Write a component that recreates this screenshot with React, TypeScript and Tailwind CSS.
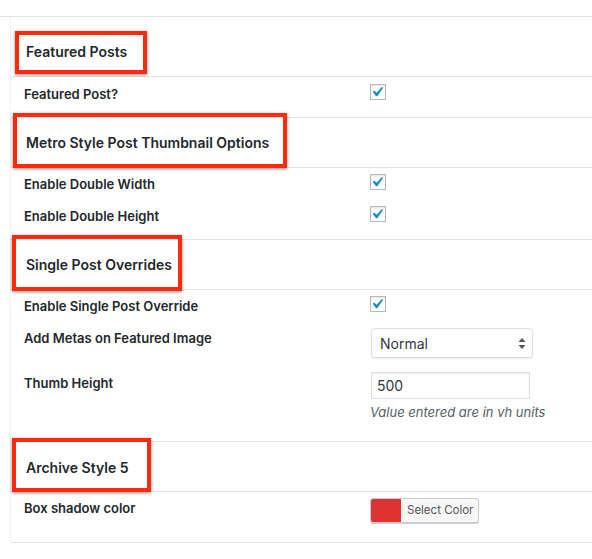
import * as React from "react";

const font = { fontFamily: "Inter, 'Liberation Sans', sans-serif" };

function Check() {
  return (
    <span className="relative h-4 w-4 shrink-0 border border-[#b4b9be] bg-white shadow-[inset_0_1px_2px_rgba(0,0,0,0.1)]">
      <svg width="20" height="20" viewBox="0 0 20 20" className="absolute -left-[4px] -top-[3px]">
        <path d="M14.83 4.89l1.34.94-5.81 8.38H9.02L5.78 9.67l1.34-1.25 2.57 2.4z" fill="#1e8cbe" />
      </svg>
    </span>
  );
}

function Mark({ className }: { className: string }) {
  return (
    <span
      className={
        "pointer-events-none absolute border-4 border-[#ff2a0c] shadow-[0_1px_3px_rgba(0,0,0,0.45)] " + className
      }
    />
  );
}

function Heading({ title, pad, mark }: { title: string; pad: string; mark: string }) {
  return (
    <div className={"relative border-b border-[#e2e4e7] pl-[15px] " + pad}>
      <h3 className="text-[14px] font-semibold leading-[20px] text-[#23282d]">{title}</h3>
      <Mark className={mark} />
    </div>
  );
}

function Label({ children }: { children: React.ReactNode }) {
  return (
    <div className="w-[359px] shrink-0 pl-[13px] text-[13px] font-semibold leading-[20px] text-[#23282d]">
      {children}
    </div>
  );
}

export default function App() {
  return (
    <div className="h-[559px] w-[592px] overflow-hidden bg-white" style={font}>
      <div className="mt-4 border-t border-[#e2e4e7]">
        <div className="ml-[10px] border-l border-[#f1f1f1]">
          <Heading title="Featured Posts" pad="pt-[25px] pb-[14px]" mark="left-[4px] top-[14px] h-[43px] w-[132px]" />
          <div className="border-b border-[#e2e4e7] pt-[7px] pb-[13px]">
            <div className="flex items-start">
              <Label>Featured Post?</Label>
              <Check />
            </div>
          </div>

          <Heading
            title="Metro Style Post Thumbnail Options"
            pad="pt-[15px] pb-[14px]"
            mark="left-[2px] -top-[5px] h-[55px] w-[274px]"
          />
          <div className="flex flex-col gap-3 border-b border-[#e2e4e7] pt-[6px] pb-[13px]">
            <div className="flex items-start">
              <Label>Enable Double Width</Label>
              <Check />
            </div>
            <div className="flex items-start">
              <Label>Enable Double Height</Label>
              <Check />
            </div>
          </div>

          <Heading
            title="Single Post Overrides"
            pad="pt-[15px] pb-[14px]"
            mark="left-[1px] -top-[5px] h-[56px] w-[170px]"
          />
          <div className="flex flex-col border-b border-[#e2e4e7] pt-[6px] pb-[20px]">
            <div className="flex items-start">
              <Label>Enable Single Post Override</Label>
              <Check />
            </div>
            <div className="mt-3 flex items-start">
              <Label>Add Metas on Featured Image</Label>
              <div className="relative ml-px flex h-[30px] w-[162px] items-center rounded-[4px] border border-[#dddddd] bg-white pl-[8px] text-[14px] text-[#32373c] shadow-[0_1px_2px_rgba(0,0,0,0.07)]">
                Normal
                <svg width="8" height="11" viewBox="0 0 8 11" className="absolute right-[6px] top-[9px]">
                  <path d="M4 0L7.5 4H0.5z" fill="#555" />
                  <path d="M4 11L7.5 7H0.5z" fill="#555" />
                </svg>
              </div>
            </div>
            <div className="mt-[14px] flex items-start">
              <Label>
                <div className="pt-px">Thumb Height</div>
              </Label>
              <div className="flex flex-col">
                <div className="ml-px flex h-[27px] w-[159px] items-center border border-[#dddddd] bg-white pl-[5px] text-[14px] text-[#32373c] shadow-[inset_0_1px_2px_rgba(0,0,0,0.07)]">
                  500
                </div>
                <p className="mt-[4px] text-[13px] italic leading-[18px] text-[#555d66]">Value entered are in vh units</p>
              </div>
            </div>
          </div>

          <Heading
            title="Archive Style 5"
            pad="pt-[16px] pb-[13px]"
            mark="left-[1px] -top-[4px] h-[54px] w-[139px]"
          />
          <div className="border-b border-[#e2e4e7] pt-[6px] pb-[19px]">
            <div className="flex items-start">
              <Label>Box shadow color</Label>
              <div className="flex h-[25px] w-[109px] overflow-hidden rounded-[3px] border border-[#cccccc] bg-[#f7f7f7] shadow-[0_1px_0_#cccccc]">
                <span className="w-[30px] bg-[#dd3333]" />
                <span className="flex items-center pl-[6px] text-[11.5px] text-[#555555]">Select Color</span>
              </div>
            </div>
          </div>
        </div>
      </div>
    </div>
  );
}
